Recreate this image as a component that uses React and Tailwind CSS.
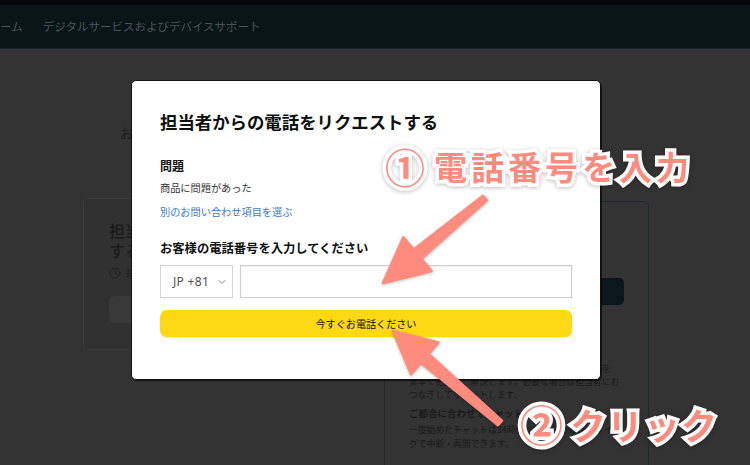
import React from "react";
import { Clock, ChevronDown } from "lucide-react";

const jp = "font-['Noto_Sans_CJK_JP',sans-serif]";

const Arrows = () => (
  <svg
    className="absolute inset-0 pointer-events-none"
    width="750"
    height="465"
    viewBox="0 0 750 465"
  >
    <g
      fill="#ff8b7f"
      stroke="#ff8b7f"
      strokeWidth="2.5"
      strokeLinejoin="round"
      style={{ filter: "drop-shadow(0 1px 1.5px rgba(0,0,0,0.25))" }}
    >
      <polygon points="483.1,195.7 413.7,249.6 403.4,237.3 383,283 431.6,271.1 421.3,258.8 486.9,200.3" />
      <polygon points="502,420.7 428.7,353.9 438.5,342.5 393,331 411.1,374.3 420.9,362.9 498,425.3" />
    </g>
  </svg>
);

const Note = ({ mark, text, className, markClass, textClass }) => (
  <div
    className={`absolute flex items-center font-bold leading-none text-[#ff8b7f] [-webkit-text-stroke:7px_#ffffff] [paint-order:stroke_fill] drop-shadow-[0_1px_2px_rgba(0,0,0,0.25)] ${className}`}
  >
    <span className={markClass}>{mark}</span>
    <span className={textClass}>{text}</span>
  </div>
);

const App = () => {
  return (
    <div
      className={`relative w-[750px] h-[465px] overflow-hidden bg-[#333333] ${jp}`}
    >
      {/* 上部ナビ */}
      <div className="h-[5px] bg-[#07090c]" />
      <nav className="flex items-center gap-[20px] h-[44px] bg-[#081519] border-b border-[#1b2628] text-[11.5px] text-[#4b5457]">
        <span>ーム</span>
        <span>デジタルサービスおよびデバイスサポート</span>
      </nav>

      {/* 背景のページ */}
      <main className="pl-[83px] w-[649px]">
        <p className="mt-[76px] ml-[37px] text-[13px] leading-[16px] text-[#1c1c1c] whitespace-nowrap">
          お問い合わせ方法をお選びください。担当者がチャットまたは電話で対応します。
        </p>

        <div className="flex items-start gap-[24px] mt-[57px]">
          <div className="w-[277px] h-[152px] rounded-[4px] border border-[#3b3b3b] bg-[#313131] pt-[21px] px-[25px]">
            <div className="text-[16px] leading-[20px] font-medium text-[#1b1b1b]">
              担当者からの電話をリクエストする
            </div>
            <div className="flex items-center gap-[5px] mt-[6px] h-[14px] text-[10px] text-[#1d1d1d]">
              <Clock size={12} strokeWidth={1.6} />
              <span>現在の待ち時間：1分未満</span>
            </div>
            <div className="mt-[16px] h-[27px] rounded-[6px] bg-[#393939]" />
          </div>

          <div className="w-[265px] h-[300px] mt-[3px] rounded-[5px] border border-[#1d2a2e] px-[24px] pt-[21px]">
            <div className="text-[16px] leading-[20px] font-medium text-[#1b1b1b]">
              チャットで問い合わせる
            </div>
            <div className="flex items-center gap-[5px] mt-[5px] h-[14px] text-[10px] text-[#1d1d1d]">
              <Clock size={12} strokeWidth={1.6} />
              <span>すぐにつながります</span>
            </div>
            <div className="mt-[16px] h-[27px] rounded-[5px] bg-[#0a171b]" />
            <div className="mt-[40px] text-[9.5px] leading-[13px] font-bold text-[#1b1b1b]">
              AIがすぐに対応
            </div>
            <div className="mt-[4px] text-[8.8px] leading-[13px] text-[#1b1b1b] whitespace-nowrap">
              <div>お客様の状況に合わせてAIがお問い合わせのことを</div>
              <div>素早く把握し、解決します。必要な場合は担当者にお</div>
              <div>つなぎしてサポートします。</div>
            </div>
            <div className="mt-[6px] text-[9.5px] leading-[13px] font-bold text-[#1b1b1b]">
              ご都合に合わせてチャットを中断
            </div>
            <div className="mt-[3px] text-[8.8px] leading-[14px] text-[#1b1b1b] whitespace-nowrap">
              <div>一度始めたチャットは24時間以内ならお好きなタイミ</div>
              <div>グで中断・再開できます。</div>
            </div>
          </div>
        </div>
      </main>

      {/* モーダル */}
      <div className="absolute left-[131px] top-[80px] w-[470px] h-[300px] rounded-[5px] border border-[#111111] bg-white px-[28px] pt-[30px] shadow-[1px_1px_0_rgba(0,0,0,0.6)]">
        <h2 className="text-[17.4px] leading-[22px] font-bold text-[#0f1111]">
          担当者からの電話をリクエストする
        </h2>
        <div className="mt-[25px] text-[12px] leading-[16px] font-bold text-[#0f1111]">
          問題
        </div>
        <div className="mt-[7px] text-[10.2px] leading-[14px] text-[#333333]">
          商品に問題があった
        </div>
        <div className="mt-[10px] text-[10.2px] leading-[14px] text-[#3a7cc4]">
          別のお問い合わせ項目を選ぶ
        </div>
        <div className="mt-[21px] text-[12.3px] leading-[16px] font-bold text-[#0f1111]">
          お客様の電話番号を入力してください
        </div>
        <div className="flex gap-[7px] mt-[9px] h-[33px]">
          <div className="flex items-center justify-between w-[73px] border border-[#d5d5d5] pl-[12px] pr-[4px] font-['Noto_Sans',sans-serif] text-[12px] text-[#505050]">
            <span className="tracking-[0.3px]">JP +81</span>
            <ChevronDown size={12} strokeWidth={1.4} />
          </div>
          <div className="flex-1 border border-[#cfcfcf] shadow-[inset_0_1px_1px_rgba(0,0,0,0.06)]" />
        </div>
        <button className="mt-[12px] w-full h-[27px] rounded-[7px] bg-[#ffd814] shadow-[0_1px_2px_rgba(0,0,0,0.12)] text-[10.1px] text-[#0f1111]">
          今すぐお電話ください
        </button>
      </div>

      {/* 注釈 */}
      <Arrows />
      <Note
        mark="①"
        text="電話番号を入力"
        className="left-[385px] top-[146px] text-[33px]"
        markClass="text-[40px]"
        textClass="ml-[9px] tracking-[4px]"
      />
      <Note
        mark="②"
        text="クリック"
        className="left-[520px] top-[402px] text-[36px]"
        markClass="text-[43px]"
        textClass="ml-[7px] tracking-[1px]"
      />
    </div>
  );
};

export default App;
